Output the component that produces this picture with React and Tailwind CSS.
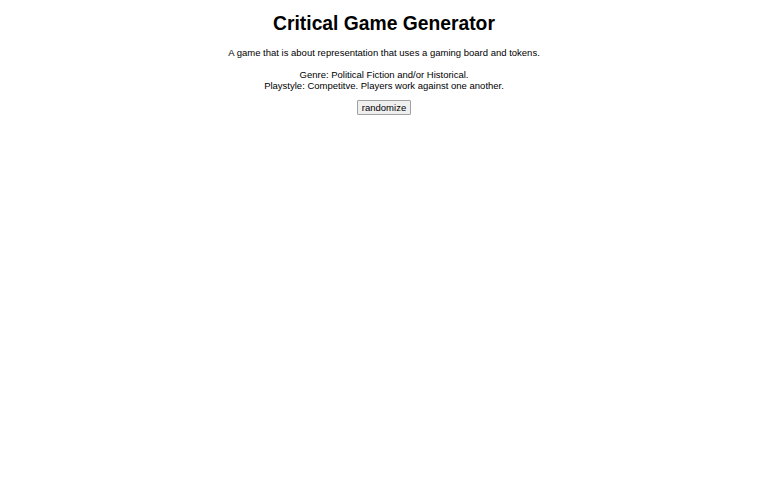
import React, { useState } from 'react';

export default function App() {
  const [game] = useState({
    about: 'A game that is about representation that uses a gaming board and tokens.',
    genre: 'Political Fiction and/or Historical.',
    playstyle: 'Competitve. Players work against one another.',
  });

  return (
    <div className="min-h-screen bg-white text-black text-center font-['Liberation_Sans',Arial,sans-serif]">
      <h1 className="pt-[13px] text-[19.3px] leading-[22px] font-bold">Critical Game Generator</h1>
      <p className="mt-[12px] text-[9.5px] leading-[11px]">{game.about}</p>
      <div className="mt-[11px] text-[9.5px] leading-[11px]">
        <p>Genre: {game.genre}</p>
        <p>Playstyle: {game.playstyle}</p>
      </div>
      <button className="mt-[9px] px-[4px] h-[15px] text-[9.5px] leading-[13px] bg-[#efefef] border border-[#a0a0a0] rounded-[1px]">
        randomize
      </button>
    </div>
  );
}
